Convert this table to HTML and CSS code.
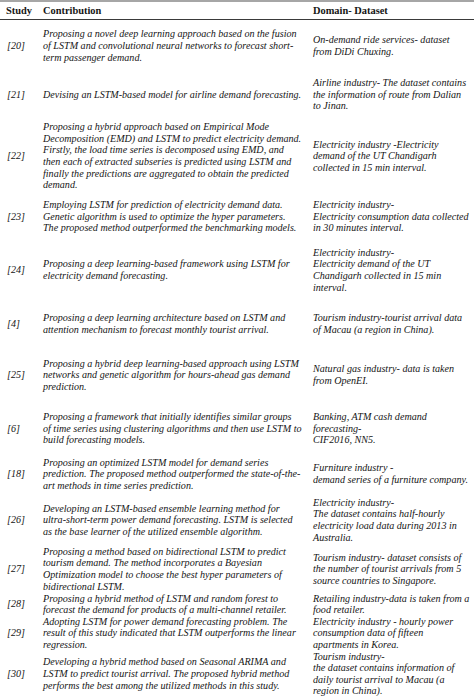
FILE: index.html
```html
<!DOCTYPE html>
<html>
<head>
<meta charset="utf-8">
<link rel="stylesheet" href="styles.css">
</head>
<body>
<table class="lit">
  <thead>
    <tr class="head">
      <th class="c-study">Study</th>
      <th class="c-contrib">Contribution</th>
      <th class="c-domain">Domain- Dataset</th>
    </tr>
  </thead>
  <tbody>
    <tr>
      <td class="c-study">[20]</td>
      <td class="c-contrib">Proposing a novel deep learning approach based on the fusion<br>of LSTM and convolutional neural networks to forecast short-<br>term passenger demand.</td>
      <td class="c-domain">On-demand ride services- dataset<br>from DiDi Chuxing.</td>
    </tr>
    <tr>
      <td class="c-study">[21]</td>
      <td class="c-contrib">Devising an LSTM-based model for airline demand forecasting.</td>
      <td class="c-domain">Airline industry- The dataset contains<br>the information of route from Dalian<br>to Jinan.</td>
    </tr>
    <tr>
      <td class="c-study">[22]</td>
      <td class="c-contrib">Proposing a hybrid approach based on Empirical Mode<br>Decomposition (EMD) and LSTM to predict electricity demand.<br>Firstly, the load time series is decomposed using EMD, and<br>then each of extracted subseries is predicted using LSTM and<br>finally the predictions are aggregated to obtain the predicted<br>demand.</td>
      <td class="c-domain">Electricity industry -Electricity<br>demand of the UT Chandigarh<br>collected in 15 min interval.</td>
    </tr>
    <tr>
      <td class="c-study">[23]</td>
      <td class="c-contrib">Employing LSTM for prediction of electricity demand data.<br>Genetic algorithm is used to optimize the hyper parameters.<br>The proposed method outperformed the benchmarking models.</td>
      <td class="c-domain">Electricity industry-<br>Electricity consumption data collected<br>in 30 minutes interval.</td>
    </tr>
    <tr>
      <td class="c-study">[24]</td>
      <td class="c-contrib">Proposing a deep learning-based framework using LSTM for<br>electricity demand forecasting.</td>
      <td class="c-domain">Electricity industry-<br>Electricity demand of the UT<br>Chandigarh collected in 15 min<br>interval.</td>
    </tr>
    <tr>
      <td class="c-study">[4]</td>
      <td class="c-contrib">Proposing a deep learning architecture based on LSTM and<br>attention mechanism to forecast monthly tourist arrival.</td>
      <td class="c-domain">Tourism industry-tourist arrival data<br>of Macau (a region in China).</td>
    </tr>
    <tr>
      <td class="c-study">[25]</td>
      <td class="c-contrib">Proposing a hybrid deep learning-based approach using LSTM<br>networks and genetic algorithm for hours-ahead gas demand<br>prediction.</td>
      <td class="c-domain">Natural gas industry- data is taken<br>from OpenEI.</td>
    </tr>
    <tr>
      <td class="c-study">[6]</td>
      <td class="c-contrib">Proposing a framework that initially identifies similar groups<br>of time series using clustering algorithms and then use LSTM to<br>build forecasting models.</td>
      <td class="c-domain">Banking, ATM cash demand<br>forecasting-<br>CIF2016, NN5.</td>
    </tr>
    <tr>
      <td class="c-study">[18]</td>
      <td class="c-contrib">Proposing an optimized LSTM model for demand series<br>prediction. The proposed method outperformed the state-of-the-<br>art methods in time series prediction.</td>
      <td class="c-domain">Furniture industry -<br>demand series of a furniture company.</td>
    </tr>
    <tr>
      <td class="c-study">[26]</td>
      <td class="c-contrib">Developing an LSTM-based ensemble learning method for<br>ultra-short-term power demand forecasting. LSTM is selected<br>as the base learner of the utilized ensemble algorithm.</td>
      <td class="c-domain">Electricity industry-<br>The dataset contains half-hourly<br>electricity load data during 2013 in<br>Australia.</td>
    </tr>
    <tr>
      <td class="c-study">[27]</td>
      <td class="c-contrib">Proposing a method based on bidirectional LSTM to predict<br>tourism demand. The method incorporates a Bayesian<br>Optimization model to choose the best hyper parameters of<br>bidirectional LSTM.</td>
      <td class="c-domain">Tourism industry- dataset consists of<br>the number of tourist arrivals from 5<br>source countries to Singapore.</td>
    </tr>
    <tr>
      <td class="c-study">[28]</td>
      <td class="c-contrib">Proposing a hybrid method of LSTM and random forest to<br>forecast the demand for products of a multi-channel retailer.</td>
      <td class="c-domain">Retailing industry-data is taken from a<br>food retailer.</td>
    </tr>
    <tr>
      <td class="c-study">[29]</td>
      <td class="c-contrib">Adopting LSTM for power demand forecasting problem. The<br>result of this study indicated that LSTM outperforms the linear<br>regression.</td>
      <td class="c-domain">Electricity industry - hourly power<br>consumption data of fifteen<br>apartments in Korea.</td>
    </tr>
    <tr>
      <td class="c-study">[30]</td>
      <td class="c-contrib">Developing a hybrid method based on Seasonal ARIMA and<br>LSTM to predict tourist arrival. The proposed hybrid method<br>performs the best among the utilized methods in this study.</td>
      <td class="c-domain">Tourism industry-<br>the dataset contains information of<br>daily tourist arrival to Macau (a<br>region in China).</td>
    </tr>
  </tbody>
</table>
</body>
</html>
```

FILE: styles.css
```css
html, body {
  margin: 0;
  padding: 0;
  background: #ffffff;
}

body {
  width: 474px;
  height: 696px;
  overflow: hidden;
  font-family: "Liberation Serif", "Times New Roman", serif;
  color: #151515;
}

.lit {
  width: 474px;
  border-collapse: collapse;
  border-spacing: 0;
  table-layout: fixed;
  border-top: 2px solid #a6a6a6;
}

.lit th,
.lit td {
  padding: 0;
  white-space: nowrap;
  vertical-align: middle;
  text-align: left;
}

.lit th {
  font-weight: bold;
  font-size: 10.4px;
  line-height: 12px;
  height: 17px;
  border-bottom: 1px solid #3a3a3a;
}

.lit td {
  font-style: italic;
  font-size: 10.1px;
  line-height: 11.6px;
}

.lit th.c-study {
  width: 37px;
  padding-left: 6px;
}

.lit td.c-study {
  padding-left: 7px;
  width: 36px;
}

.c-contrib {
  width: 270px;
}

.c-domain {
  width: 161px;
}

tbody tr:nth-child(1)  { height: 52px; }
tbody tr:nth-child(2)  { height: 46px; }
tbody tr:nth-child(3)  { height: 77px; }
tbody tr:nth-child(4)  { height: 44px; }
tbody tr:nth-child(5)  { height: 63px; }
tbody tr:nth-child(6)  { height: 45px; }
tbody tr:nth-child(7)  { height: 57px; }
tbody tr:nth-child(8)  { height: 50px; }
tbody tr:nth-child(9)  { height: 41px; }
tbody tr:nth-child(10) { height: 51px; }
tbody tr:nth-child(11) { height: 47px; }
tbody tr:nth-child(12) { height: 23px; }
tbody tr:nth-child(13) { height: 35px; }
tbody tr:nth-child(14) { height: 46px; }
```
